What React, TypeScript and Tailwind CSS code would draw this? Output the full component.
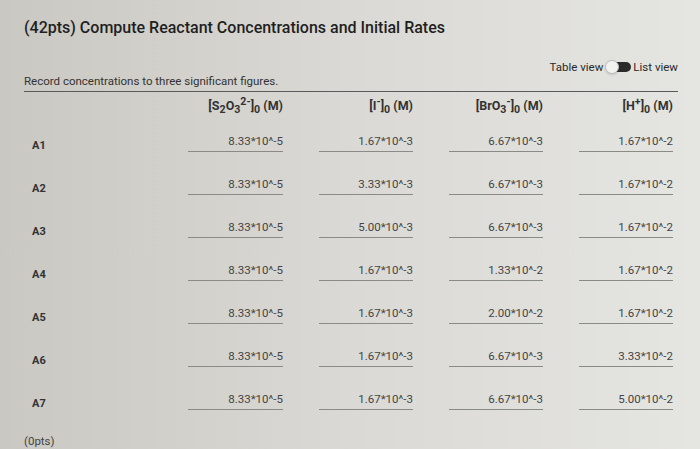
const rows = [
  ["A1", "8.33*10^-5", "1.67*10^-3", "6.67*10^-3", "1.67*10^-2"],
  ["A2", "8.33*10^-5", "3.33*10^-3", "6.67*10^-3", "1.67*10^-2"],
  ["A3", "8.33*10^-5", "5.00*10^-3", "6.67*10^-3", "1.67*10^-2"],
  ["A4", "8.33*10^-5", "1.67*10^-3", "1.33*10^-2", "1.67*10^-2"],
  ["A5", "8.33*10^-5", "1.67*10^-3", "2.00*10^-2", "1.67*10^-2"],
  ["A6", "8.33*10^-5", "1.67*10^-3", "6.67*10^-3", "3.33*10^-2"],
  ["A7", "8.33*10^-5", "1.67*10^-3", "6.67*10^-3", "5.00*10^-2"],
];

const grid = "grid grid-cols-[128px_95px_94px_94px_94px] gap-x-[36px]";

const Toggle = () => (
  <div className="relative h-[14px] w-[26px]">
    <div className="absolute top-[2px] left-[4px] h-[10px] w-[22px] rounded-full bg-[#2b2b2b]" />
    <div className="absolute top-0 left-0 h-[14px] w-[14px] rounded-full border border-[#bdbdbd] bg-[#f2f2f0] shadow" />
  </div>
);

export default function App() {
  return (
    <div className="h-[449px] w-[700px] overflow-hidden bg-linear-to-r from-[#cac8c2] via-[#dad9d5] to-[#e5e5e2] px-[24px] pt-[18px] font-['Roboto',sans-serif] text-[#2a2a2a]">
      <h1 className="text-[16px] leading-5 font-medium text-[#1f1f1f]">
        (42pts) Compute Reactant Concentrations and Initial Rates
      </h1>

      <div className="mt-[22px] -mr-[2px] flex items-center justify-end gap-[2px] text-[11.5px] leading-[14px]">
        <span>Table view</span>
        <Toggle />
        <span>List view</span>
      </div>

      <div className="-mr-[2px] border-b border-[#5a5a5a] pb-[3px] text-[11.5px] leading-[14px] text-[#333]">
        Record concentrations to three significant figures.
      </div>

      <div className={`${grid} mt-[7px] text-[12.5px] leading-[14px] font-bold text-[#333] [&_sub]:text-[85%] [&_sup]:text-[85%]`}>
        <div />
        <div className="text-right">
          [S<sub>2</sub>O<sub>3</sub><sup>2-</sup>]<sub>0</sub> (M)
        </div>
        <div className="text-right">
          [I<sup>-</sup>]<sub>0</sub> (M)
        </div>
        <div className="text-right">
          [BrO<sub>3</sub><sup>-</sup>]<sub>0</sub> (M)
        </div>
        <div className="text-right">
          [H<sup>+</sup>]<sub>0</sub> (M)
        </div>
      </div>

      {rows.map(([label, ...vals]) => (
        <div key={label} className={`${grid} h-[43px] text-[11.5px] leading-[14px]`}>
          <div className="pt-[26px] pl-[8px] text-[11px] font-bold text-[#333]">{label}</div>
          {vals.map((v, i) => (
            <div key={i} className="pt-[21px]">
              <div className="border-b border-[#8a8a86] pb-[3px] text-right text-[#444]">{v}</div>
            </div>
          ))}
        </div>
      ))}

      <div className="mt-[20px] text-[11.5px] leading-[14px] text-[#444]">(0pts)</div>
    </div>
  );
}
